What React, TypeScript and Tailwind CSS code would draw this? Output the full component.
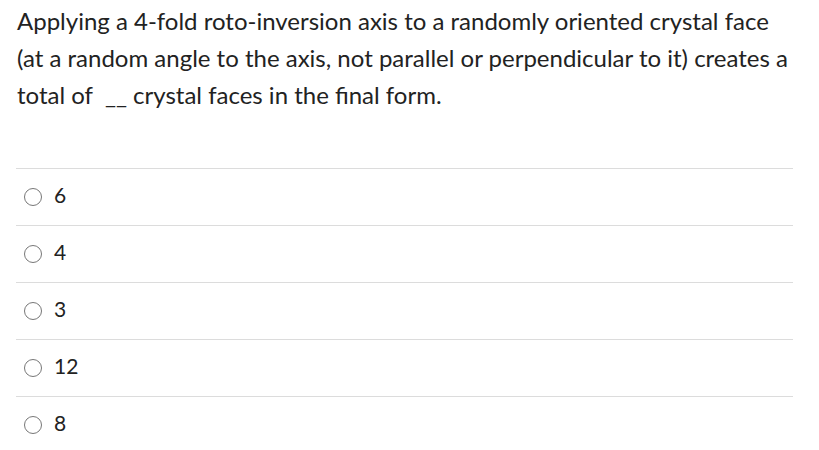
export default function App() {
  const options = ["6", "4", "3", "12", "8"];
  return (
    <div className="w-[819px] h-[450px] bg-white overflow-hidden font-['Lato','Liberation_Sans',sans-serif] text-[#222]">
      <div className="pl-[17px] pt-[2px]">
        <p className="text-[24px] leading-[37px] whitespace-nowrap">
          Applying a 4-fold roto-inversion axis to a randomly oriented crystal face
          <br />
          (at a random angle to the axis, not parallel or perpendicular to it) creates a
          <br />
          total of <span className="whitespace-pre"> __ </span>crystal faces in the final form.
        </p>
      </div>
      <div className="mt-[55px] ml-[16px] w-[777px]">
        {options.map((o) => (
          <div key={o} className="h-[57px] border-t border-[#dcdcdc] flex items-center">
            <span className="ml-[8px] w-[18px] h-[18px] rounded-full border border-[#777] bg-white" />
            <span className="ml-[12px] text-[21px] leading-[21px] pb-[6px]">{o}</span>
          </div>
        ))}
      </div>
    </div>
  );
}
